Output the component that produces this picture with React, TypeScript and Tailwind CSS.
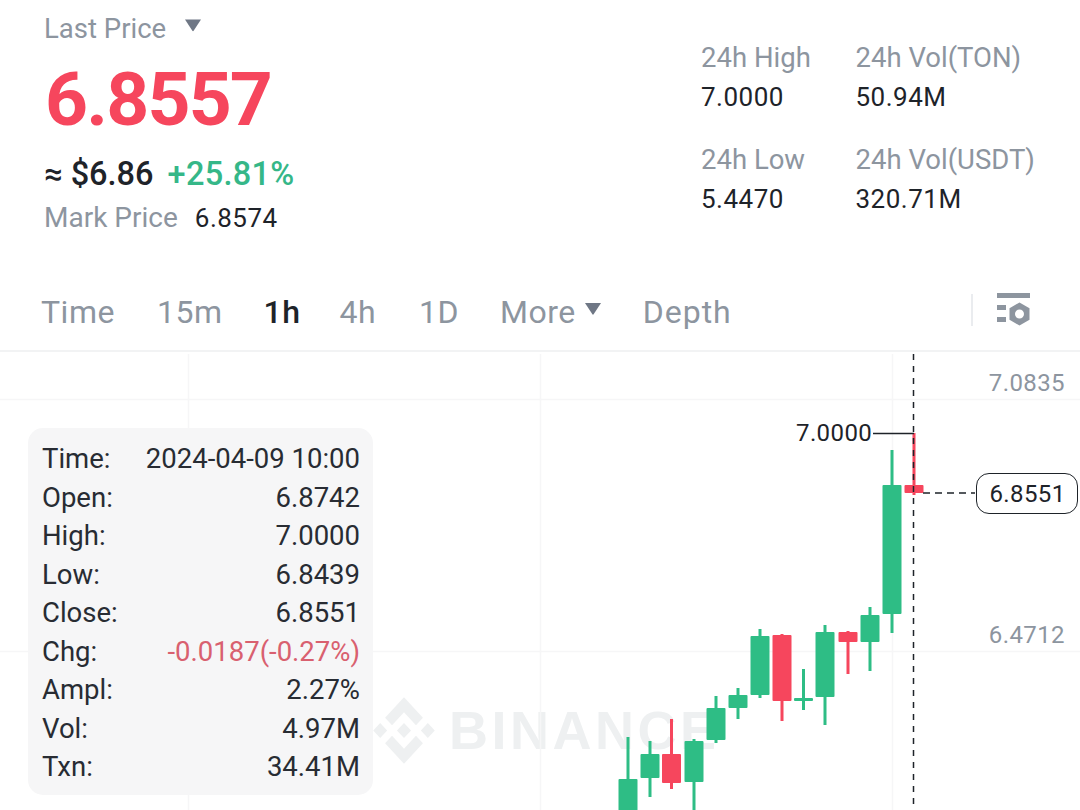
const candles = [
  { x: 628, top: 779, bottom: 830, high: 737, low: 830, up: true },
  { x: 650, top: 754, bottom: 778, high: 741, low: 797, up: true },
  { x: 671.5, top: 754, bottom: 783, high: 719, low: 789, up: false },
  { x: 694, top: 741, bottom: 782, high: 739, low: 830, up: true },
  { x: 716, top: 708, bottom: 740, high: 696, low: 743, up: true },
  { x: 738, top: 695, bottom: 708, high: 688, low: 719, up: true },
  { x: 760, top: 636, bottom: 695, high: 629, low: 698, up: true },
  { x: 782, top: 635, bottom: 701, high: 634, low: 721, up: false },
  { x: 803.5, top: 698, bottom: 701, high: 669, low: 710, up: true },
  { x: 825, top: 632, bottom: 697, high: 625, low: 725, up: true },
  { x: 848, top: 632, bottom: 642, high: 631, low: 674, up: false },
  { x: 870, top: 615, bottom: 642, high: 607, low: 671, up: true },
  { x: 892, top: 485, bottom: 614, high: 450, low: 633, up: true },
  { x: 914, top: 485, bottom: 493, high: 433, low: 495, up: false },
];

const rows = [
  ["Time:", "2024-04-09 10:00"],
  ["Open:", "6.8742"],
  ["High:", "7.0000"],
  ["Low:", "6.8439"],
  ["Close:", "6.8551"],
  ["Chg:", "-0.0187(-0.27%)"],
  ["Ampl:", "2.27%"],
  ["Vol:", "4.97M"],
  ["Txn:", "34.41M"],
];

const Caret = ({ className }: { className: string }) => (
  <svg viewBox="0 0 18 14" className={className} fill="#6f7785">
    <path d="M1 1.5h16L9.800 12.600a1 1 0 0 1-1.600 0z" />
  </svg>
);

const Stat = ({ label, value }: { label: string; value: string }) => (
  <div>
    <div className="text-[27.5px] leading-[38px] text-[#8d959f]">{label}</div>
    <div className="text-[26px] leading-[40px] tracking-[0.5px] text-[#1e2329]">{value}</div>
  </div>
);

const BinanceMark = () => (
  <svg viewBox="0 0 126 126" preserveAspectRatio="none" className="absolute left-[373px] top-[697px] h-[67px] w-[62px]" fill="#eef0f1">
    <path d="M38.700 53 63 28.700l24.300 24.300 14.100-14.100L63 .5 24.600 38.900zM.5 63l14.100-14.100L28.700 63l-14.100 14.100zM38.700 73 63 97.300 87.300 73l14.100 14.100L63 125.500 24.600 87.100zM97.300 63l14.100-14.100L125.500 63l-14.100 14.100zM77.300 63 63 48.700 52.400 59.300l-1.200 1.200L48.700 63 63 77.300z" />
  </svg>
);

export default function App() {
  return (
    <div className="h-[810px] w-[1080px] overflow-hidden bg-white font-['Roboto',sans-serif]">
      <div className="flex h-[284px] justify-between">
        <div className="pl-[44px] pt-[11px]">
          <div className="flex items-center gap-[18px] text-[27.5px] leading-[36px] text-[#8d959f]">
            <span>Last Price</span>
            <Caret className="mb-[9px] h-[14px] w-[18px]" />
          </div>
          <div className="ml-[1px] mt-[8px] text-[75px] font-bold leading-[88px] tracking-[-1.8px] text-[#f6465d]">6.8557</div>
          <div className="mt-[11px] flex items-baseline text-[32.5px] font-medium leading-[40px] text-[#1e2329]">
            <span>≈ $6.86</span>
            <span className="ml-[14px] tracking-[0.3px] text-[#35b788]">+25.81%</span>
          </div>
          <div className="mt-[5px] flex items-baseline text-[28px] leading-[38px] text-[#8d959f]">
            <span>Mark Price</span>
            <span className="ml-[17px] text-[26px] tracking-[0.5px] text-[#1e2329]">6.8574</span>
          </div>
        </div>
        <div className="mr-[44px] mt-[39px] grid h-fit w-[335px] grid-cols-[154.500px_180px] gap-y-[24px]">
          <Stat label="24h High" value="7.0000" />
          <Stat label="24h Vol(TON)" value="50.94M" />
          <Stat label="24h Low" value="5.4470" />
          <Stat label="24h Vol(USDT)" value="320.71M" />
        </div>
      </div>

      <div className="flex h-[68px] items-start justify-between border-b-2 border-[#f2f3f4] pb-[2px] pl-[41px] pr-[50px]">
        <div className="mt-[8px] flex items-center text-[32px] leading-[40px] tracking-[0.5px] text-[#8d959f]">
          <span>Time</span>
          <span className="ml-[42px]">15m</span>
          <span className="ml-[41px] font-medium text-[#1e2329]">1h</span>
          <span className="ml-[39px]">4h</span>
          <span className="ml-[43px]">1D</span>
          <span className="ml-[41px]">More</span>
          <Caret className="mb-[8px] ml-[8px] h-[15px] w-[18px]" />
          <span className="ml-[41px] tracking-[1px]">Depth</span>
        </div>
        <div className="mt-[9px] flex items-center gap-[24px]">
          <div className="h-[32px] w-[2px] bg-[#eaecef]" />
          <svg viewBox="0 0 33 33" className="h-[33px] w-[33px]" fill="#8d959f">
            <path d="M0 0h33v5H0zM0 12h9v5H0zM0 24h9v5H0z" />
            <path fillRule="evenodd" d="m22.500 9.500 10 5.700v11.600l-10 5.700-10-5.700V15.200zm0 7a4.500 4.500 0 1 0 0 9 4.500 4.500 0 0 0 0-9z" />
          </svg>
        </div>
      </div>

      {/* chart layer keeps page coords so candle data reads like the screenshot */}
      <div className="relative h-[458px] w-full">
        <div className="absolute left-0 top-[-352px] h-[810px] w-[1080px]">
          <BinanceMark />
          <span className="absolute left-[449px] top-[700px] font-['Liberation_Sans',sans-serif] text-[54px] font-bold leading-[60px] tracking-[3.5px] text-[#eef0f1]">
            BINANCE
          </span>
          <svg viewBox="0 0 1080 810" className="absolute inset-0 h-[810px] w-[1080px]">
            <g stroke="#f6f6f7" strokeWidth="1.500">
              <path d="M0 399.500h1080M0 651.500h1080" />
              <path d="M188.500 354v456M540.500 354v456M892.500 354v456" />
            </g>
            {candles.map((c) => (
              <g key={c.x} fill={c.up ? "#2ebd85" : "#f6465d"}>
                <rect x={c.x - 1.5} y={c.high} width="3" height={c.low - c.high} />
                <rect x={c.x - 9.5} y={c.top} width="19" height={c.bottom - c.top} rx="1" />
              </g>
            ))}
            <path d="M913.500 354V810" stroke="#1e2329" strokeWidth="1.500" strokeDasharray="6 6" />
            <path d="M873 433.500h41" stroke="#1e2329" strokeWidth="1.500" />
            <path d="M923 493h52" stroke="#1e2329" strokeWidth="1.500" strokeDasharray="7 5" />
          </svg>
          <span className="absolute right-[15px] top-[368px] text-[24px] leading-[30px] tracking-[0.4px] text-[#8d959f]">7.0835</span>
          <span className="absolute right-[15px] top-[620px] text-[24px] leading-[30px] tracking-[0.4px] text-[#8d959f]">6.4712</span>
          <span className="absolute left-[796px] top-[418px] text-[24px] leading-[30px] tracking-[0.4px] text-[#1e2329]">7.0000</span>
          <span className="absolute left-[976px] top-[473px] flex h-[41px] w-[102px] items-center justify-center rounded-[13px] border-[1.5px] border-[#1e2329] bg-white pl-[1px] pt-[1px] text-[24px] tracking-[0.4px] text-[#1e2329]">
            6.8551
          </span>
          <div className="absolute left-[28px] top-[428px] flex h-[367px] w-[345px] flex-col rounded-[15px] bg-[#f6f6f7] pl-[14px] pr-[13px] pt-[11.800px]">
            {rows.map(([label, value]) => (
              <div key={label} className="flex h-[38.500px] shrink-0 items-center justify-between text-[27.5px] leading-[36px] text-[#282c33]">
                <span>{label}</span>
                <span className={label === "Chg:" ? "text-[#d9606f]" : ""}>{value}</span>
              </div>
            ))}
          </div>
        </div>
      </div>
    </div>
  );
}
